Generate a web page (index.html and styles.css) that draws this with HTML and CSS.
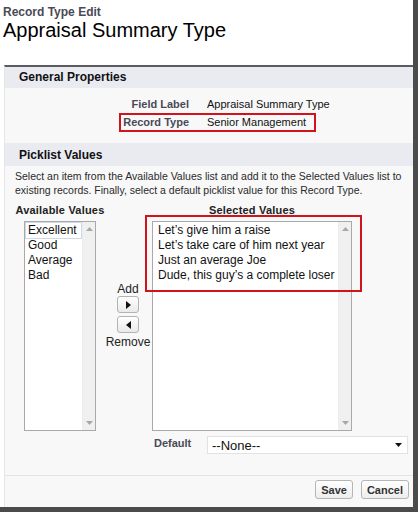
FILE: index.html
```html
<!DOCTYPE html>
<html>
<head>
<meta charset="utf-8">
<link rel="stylesheet" href="styles.css">
</head>
<body>
<div class="frame">
  <div class="head">
    <div class="crumb">Record Type Edit</div>
    <div class="title">Appraisal Summary Type</div>
  </div>
  <div class="panel">
    <div class="sec">General Properties</div>
    <div class="fields">
      <div class="flabel">Field Label</div><div class="fval">Appraisal Summary Type</div>
      <div class="flabel">Record Type</div><div class="fval">Senior Management</div>
      <div class="mark mark-rt"></div>
    </div>
    <div class="sec sec2">Picklist Values</div>
    <div class="desc">
      <div>Select an item from the Available Values list and add it to the Selected Values list to</div>
      <div>existing records. Finally, select a default picklist value for this Record Type.</div>
    </div>
    <div class="picker">
      <div class="col col-av">
        <div class="clabel">Available Values</div>
        <div class="list list-av">
          <div class="items">
            <div class="item sel">Excellent</div>
            <div class="item">Good</div>
            <div class="item">Average</div>
            <div class="item">Bad</div>
          </div>
          <div class="sbar">
            <svg class="sb-arrow" width="7" height="4" viewBox="0 0 7 4"><path d="M0 4 L3.5 0 L7 4 Z" fill="#a8a8a8"/></svg>
            <svg class="sb-arrow" width="7" height="4" viewBox="0 0 7 4"><path d="M0 0 L3.5 4 L7 0 Z" fill="#a8a8a8"/></svg>
          </div>
        </div>
      </div>
      <div class="col col-mid">
        <div class="mlabel">Add</div>
        <div class="abtn"><svg width="5" height="8" viewBox="0 0 5 8"><path d="M0 0 L5 4 L0 8 Z" fill="#111"/></svg></div>
        <div class="abtn"><svg width="5" height="8" viewBox="0 0 5 8"><path d="M5 0 L0 4 L5 8 Z" fill="#111"/></svg></div>
        <div class="mlabel rm">Remove</div>
      </div>
      <div class="col col-sel">
        <div class="clabel">Selected Values</div>
        <div class="list list-sel">
          <div class="items">
            <div class="item">Let’s give him a raise</div>
            <div class="item">Let’s take care of him next year</div>
            <div class="item">Just an average Joe</div>
            <div class="item">Dude, this guy’s a complete loser</div>
          </div>
          <div class="sbar">
            <svg class="sb-arrow" width="7" height="4" viewBox="0 0 7 4"><path d="M0 4 L3.5 0 L7 4 Z" fill="#a8a8a8"/></svg>
            <svg class="sb-arrow" width="7" height="4" viewBox="0 0 7 4"><path d="M0 0 L3.5 4 L7 0 Z" fill="#a8a8a8"/></svg>
          </div>
        </div>
        <div class="mark mark-sel"></div>
      </div>
    </div>
    <div class="defrow">
      <div class="deflabel">Default</div>
      <div class="select">
        <span>--None--</span>
        <svg width="7" height="4" viewBox="0 0 7 4"><path d="M0 0 L3.5 4 L7 0 Z" fill="#111"/></svg>
      </div>
    </div>
    <div class="footer">
      <button class="btn">Save</button>
      <button class="btn">Cancel</button>
    </div>
  </div>
</div>
</body>
</html>
```
FILE: styles.css
```css
html, body {
  margin: 0;
  padding: 0;
  background: #ffffff;
}
.frame {
  width: 418px;
  height: 512px;
  box-sizing: border-box;
  border-right: 5px solid #4b4b4b;
  border-bottom: 5px solid #4b4b4b;
  overflow: hidden;
  font-family: "Liberation Sans", Arial, sans-serif;
  background: #ffffff;
}
.head {
  height: 65px;
  box-sizing: border-box;
  padding: 5px 0 0 3px;
}
.crumb {
  font-size: 12px;
  font-weight: bold;
  color: #4a4a56;
  line-height: 14px;
}
.title {
  font-size: 20px;
  color: #000;
  line-height: 23px;
}
.panel {
  margin-left: 4px;
  width: 409px;
  height: 442px;
  box-sizing: border-box;
  border-top: 2px solid #5a5c61;
  border-left: 1px solid #e6e6e6;
  background: #f8f8f8;
  overflow: hidden;
}
.sec {
  height: 21px;
  line-height: 21px;
  background: #e9ebf1;
  font-size: 12px;
  font-weight: bold;
  color: #111;
  padding-left: 14px;
}
.sec2 {
  height: 23px;
  line-height: 24px;
}
.fields {
  position: relative;
  display: grid;
  grid-template-columns: 184px 1fr;
  column-gap: 18px;
  padding-top: 7px;
  padding-bottom: 12px;
}
.flabel {
  text-align: right;
  font-size: 11px;
  font-weight: bold;
  color: #4a4a56;
  line-height: 18px;
}
.fval {
  font-size: 11px;
  color: #111;
  line-height: 18px;
}
.mark {
  position: absolute;
  border: 2px solid #d3131c;
  box-sizing: border-box;
}
.mark-rt {
  left: 114px;
  top: 25px;
  width: 197px;
  height: 19px;
}
.desc {
  margin-top: 3px;
  padding-left: 10px;
  font-size: 10.5px;
  line-height: 14px;
  color: #2a2a2a;
  white-space: nowrap;
}
.picker {
  display: grid;
  grid-template-columns: 92px 44px 204px;
  padding-left: 9px;
  margin-top: 7px;
}
.col {
  display: flex;
  flex-direction: column;
  align-items: center;
}
.col-sel {
  position: relative;
}
.clabel {
  font-size: 11px;
  font-weight: bold;
  color: #222;
  line-height: 13px;
  height: 13px;
  letter-spacing: 0.2px;
}
.list {
  margin-top: 4px;
  height: 210px;
  box-sizing: border-box;
  border: 1px solid #a9a9a9;
  background: #fff;
  display: flex;
}
.list-av {
  width: 72px;
}
.list-sel {
  width: 200px;
}
.items {
  flex: 1;
  padding: 1px 1px 0 1px;
  min-width: 0;
}
.item {
  font-size: 12px;
  line-height: 15px;
  color: #111;
  padding-left: 2px;
  white-space: nowrap;
}
.list-sel .item {
  padding-left: 4px;
}
.item.sel {
  outline: 1px solid #cfd8e6;
  outline-offset: 0px;
}
.sbar {
  width: 12px;
  background: #f0f0f0;
  border-left: 1px solid #ececec;
  display: flex;
  flex-direction: column;
  justify-content: space-between;
  align-items: center;
  padding: 5px 0 5px 0;
}
.col-mid {
  padding-top: 78px;
}
.mlabel {
  font-size: 12px;
  line-height: 14px;
  color: #222;
}
.abtn {
  width: 22px;
  height: 17px;
  box-sizing: border-box;
  border: 1px solid #b3b3b3;
  border-radius: 3px;
  background: linear-gradient(#ffffff, #e9e9e9);
  display: flex;
  align-items: center;
  justify-content: center;
  margin-top: 3px;
}
.mlabel + .abtn {
  margin-top: 0;
}
.mlabel.rm {
  margin-top: 2px;
}
.mark-sel {
  left: -5px;
  top: 11px;
  width: 217px;
  height: 77px;
}
.defrow {
  display: flex;
  align-items: center;
  padding-left: 149px;
  margin-top: 5px;
}
.deflabel {
  width: 53px;
  font-size: 11px;
  font-weight: bold;
  color: #4a4a56;
  padding-bottom: 4px;
}
.select {
  width: 201px;
  height: 18px;
  box-sizing: border-box;
  border: 1px solid #e2e2e2;
  background: #fff;
  display: flex;
  align-items: center;
  justify-content: space-between;
  padding: 0 5px 0 4px;
  font-size: 13px;
  color: #111;
}
.footer {
  margin-top: 21px;
  border-top: 1px solid #e3e3e3;
  display: flex;
  justify-content: flex-end;
  gap: 8px;
  padding: 4px 4px 0 0;
}
.btn {
  font-family: "Liberation Sans", Arial, sans-serif;
  font-size: 11px;
  font-weight: bold;
  color: #333;
  height: 19px;
  padding: 0 5px;
  border: 1px solid #b5b5b5;
  border-radius: 3px;
  background: linear-gradient(#ffffff, #ededed);
  margin: 0;
}
```
